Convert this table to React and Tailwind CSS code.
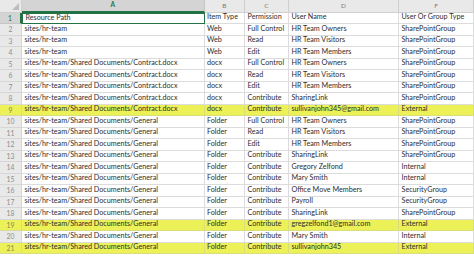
import React from "react";

const doc = "sites/hr-team/Shared Documents/Contract.docx";
const gen = "sites/hr-team/Shared Documents/General";

const rows = [
  ["Resource Path", "Item Type", "Permission", "User Name", "User Or Group Type"],
  ["sites/hr-team", "Web", "Full Control", "HR Team Owners", "SharePointGroup"],
  ["sites/hr-team", "Web", "Read", "HR Team Visitors", "SharePointGroup"],
  ["sites/hr-team", "Web", "Edit", "HR Team Members", "SharePointGroup"],
  [doc, "docx", "Full Control", "HR Team Owners", "SharePointGroup"],
  [doc, "docx", "Read", "HR Team Visitors", "SharePointGroup"],
  [doc, "docx", "Edit", "HR Team Members", "SharePointGroup"],
  [doc, "docx", "Contribute", "SharingLink", "SharePointGroup"],
  [doc, "docx", "Contribute", "sullivanjohn345@gmail.com", "External", true],
  [gen, "Folder", "Full Control", "HR Team Owners", "SharePointGroup"],
  [gen, "Folder", "Read", "HR Team Visitors", "SharePointGroup"],
  [gen, "Folder", "Edit", "HR Team Members", "SharePointGroup"],
  [gen, "Folder", "Contribute", "SharingLink", "SharePointGroup"],
  [gen, "Folder", "Contribute", "Gregory Zelfond", "Internal"],
  [gen, "Folder", "Contribute", "Mary Smith", "Internal"],
  [gen, "Folder", "Contribute", "Office Move Members", "SecurityGroup"],
  [gen, "Folder", "Contribute", "Payroll", "SecurityGroup"],
  [gen, "Folder", "Contribute", "SharingLink", "SharePointGroup"],
  [gen, "Folder", "Contribute", "gregzelfond1@gmail.com", "External", true],
  [gen, "Folder", "Contribute", "Mary Smith", "Internal"],
  [gen, "Folder", "Contribute", "sullivanjohn345", "External", true],
];

const cols = "grid grid-cols-[22px_182.5px_40.5px_44px_110px_1fr]";

const App = () => {
  return (
    <div
      className="w-[474px] h-[257px] bg-white overflow-hidden text-[7.2px] text-[#2e2e2e]"
      style={{ fontFamily: "Lato, 'Open Sans', sans-serif" }}
    >
      {/* column letters */}
      <div className={`${cols} h-[12.5px] bg-[#e9e9e9] text-[6.5px] text-[#7a7a7a]`}>
        <div className="relative border-r border-b border-[#cfcfcf]">
          <div className="absolute right-[2px] bottom-[2px] w-0 h-0 border-l-[7px] border-l-transparent border-b-[7px] border-b-[#bdbdbd]" />
        </div>
        <div className="flex items-center justify-center bg-[#d4d4d4] border-r border-[#c4c4c4] border-b-2 border-b-[#217346] text-[#217346] font-bold">
          A
        </div>
        {["B", "C", "D", "F"].map((l) => (
          <div
            key={l}
            className="flex items-center justify-center border-r border-b border-[#cfcfcf]"
          >
            {l}
          </div>
        ))}
      </div>

      {rows.map((r, i) => {
        const hl = r[5];
        const first = i === 0;
        return (
          <div
            key={i}
            className={`${cols} h-[11.5px] ${hl ? "bg-[#ecf158]" : ""}`}
          >
            <div
              className={`flex items-center justify-center text-[6.8px] border-r border-b ${
                first
                  ? "bg-[#d4d4d4] text-[#217346] border-r-[#217346] border-r-2 border-b-[#c4c4c4]"
                  : hl
                  ? "text-[#8a8a5a] border-[#d8d8a0]"
                  : "bg-[#e9e9e9] text-[#8f8f8f] border-[#d6d6d6]"
              }`}
            >
              {i + 1}
            </div>
            {r.slice(0, 5).map((c, j) => (
              <div
                key={j}
                className={`flex items-center pl-[2.5px] whitespace-nowrap overflow-hidden ${
                  first && j === 0
                    ? "border border-[#217346]"
                    : `border-r border-b ${hl ? "border-[#d9dd7a]" : "border-[#dcdcdc]"}`
                }`}
              >
                {c}
              </div>
            ))}
          </div>
        );
      })}
    </div>
  );
};

export default App;
